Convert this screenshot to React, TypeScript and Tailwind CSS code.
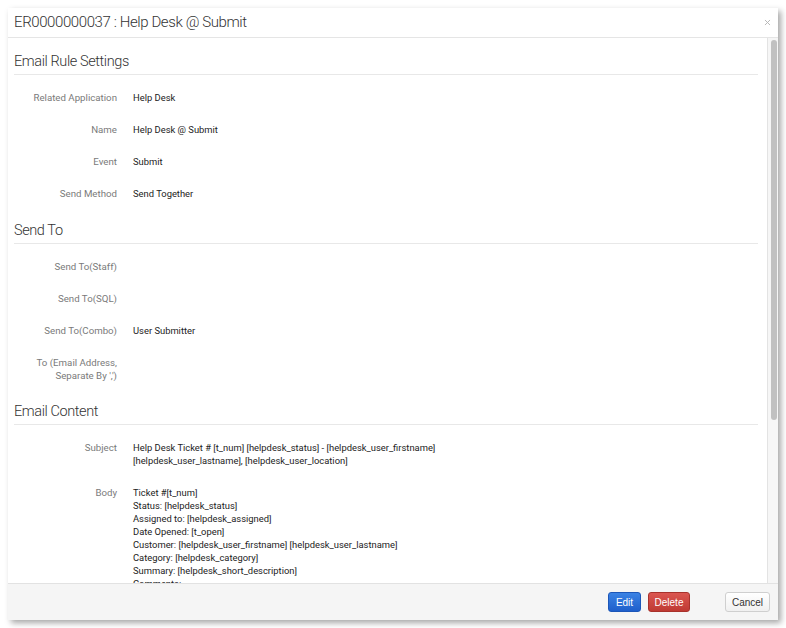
import { X } from "lucide-react";

type Row = { label: string[]; value?: string[] };

const ruleSettings: Row[] = [
  { label: ["Related Application"], value: ["Help Desk"] },
  { label: ["Name"], value: ["Help Desk @ Submit"] },
  { label: ["Event"], value: ["Submit"] },
  { label: ["Send Method"], value: ["Send Together"] },
];

const sendTo: Row[] = [
  { label: ["Send To(Staff)"] },
  { label: ["Send To(SQL)"] },
  { label: ["Send To(Combo)"], value: ["User Submitter"] },
  { label: ["To (Email Address,", "Separate By ',')"] },
];

const emailContent: Row[] = [
  {
    label: ["Subject"],
    value: [
      "Help Desk Ticket # [t_num] [helpdesk_status] - [helpdesk_user_firstname]",
      "[helpdesk_user_lastname], [helpdesk_user_location]",
    ],
  },
  {
    label: ["Body"],
    value: [
      "Ticket #[t_num]",
      "Status: [helpdesk_status]",
      "Assigned to: [helpdesk_assigned]",
      "Date Opened: [t_open]",
      "Customer: [helpdesk_user_firstname] [helpdesk_user_lastname]",
      "Category: [helpdesk_category]",
      "Summary: [helpdesk_short_description]",
      "Comments:",
      "[t_comments]",
    ],
  },
];

function Section({ title, rows, className }: { title: string; rows: Row[]; className?: string }) {
  return (
    <div className={className}>
      <h2 className="pt-[1px] text-[14.5px] tracking-[-0.4px] font-light leading-[20px] text-[#333] pb-[2px] border-b border-[#e8e8e8]">
        {title}
      </h2>
      <div className="mt-[6px]">
        {rows.map((row) => (
          <div key={row.label[0]} className="flex pt-[10px] pb-[9px] leading-[13px]">
            <div className="w-[103px] shrink-0 text-right text-[9.7px] text-[#7a7a7a]">
              {row.label.map((l) => (
                <div key={l}>{l}</div>
              ))}
            </div>
            <div className="ml-[16px] text-[9.4px] text-[#222]">
              {(row.value ?? []).map((v) => (
                <div key={v}>{v}</div>
              ))}
            </div>
          </div>
        ))}
      </div>
    </div>
  );
}

export default function App() {
  return (
    <div className="w-[786px] h-[628px] bg-white overflow-hidden" style={{ fontFamily: "Roboto, 'Liberation Sans', sans-serif" }}>
      <div className="ml-[8px] mt-[8px] w-[770px] h-[612px] bg-white flex flex-col shadow-[3px_3px_6px_rgba(0,0,0,0.35)]">
        {/* Header */}
        <div className="h-[30px] shrink-0 border-b border-[#e5e5e5] flex items-start justify-between pl-[6px] pr-[6px]">
          <h1 className="pt-[4px] text-[15px] tracking-[-0.4px] font-light leading-[20px] text-[#333]">
            ER0000000037 : Help Desk @ Submit
          </h1>
          <X className="mt-[10px] w-[9px] h-[9px] text-[#b5b5b5]" strokeWidth={2.5} />
        </div>

        {/* Body */}
        <div className="flex flex-1 min-h-0">
          <div className="flex-1 overflow-hidden pl-[6px] pr-[9px] pt-[13px]">
            <Section title="Email Rule Settings" rows={ruleSettings} />
            <Section title="Send To" rows={sendTo} className="mt-[11px]" />
            <Section title="Email Content" rows={emailContent} className="mt-[10px]" />
          </div>
          <div className="w-[11px] shrink-0 bg-[#f6f6f6] border-l border-[#e3e3e3] pt-[2px] pl-[3px]">
            <div className="w-[6px] h-[380px] rounded-full bg-[#c1c1c1]" />
          </div>
        </div>

        {/* Footer */}
        <div
          className="h-[37px] shrink-0 border-t border-[#e2e2e2] bg-[#f5f5f5] flex items-center justify-end pr-[8px] text-[10px]"
          style={{ fontFamily: "'Liberation Sans', Arial, sans-serif" }}
        >
          <button className="w-[33px] h-[20px] rounded-[3px] text-white border border-[#1c56b8] bg-gradient-to-b from-[#3a82e4] to-[#1f5fcb]">
            Edit
          </button>
          <button className="ml-[7px] w-[42px] h-[20px] rounded-[3px] text-white border border-[#a8322c] bg-gradient-to-b from-[#db5650] to-[#bf3a33]">
            Delete
          </button>
          <button className="ml-[35px] w-[45px] h-[20px] rounded-[3px] text-[#333] border border-[#cfcfcf] bg-gradient-to-b from-white to-[#f0f0f0]">
            Cancel
          </button>
        </div>
      </div>
    </div>
  );
}
